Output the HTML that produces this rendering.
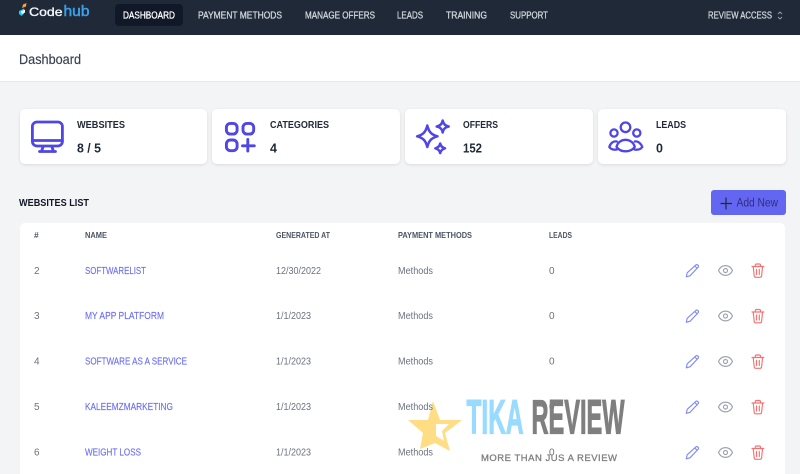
<!DOCTYPE html>
<html><head><meta charset="utf-8"><style>
html,body{margin:0;padding:0;width:800px;height:474px;overflow:hidden;background:#f3f4f6}
#w{position:relative;width:800px;height:474px;overflow:hidden;background:#f3f4f6}
.b{position:absolute}
.card{background:#fff;border-radius:5px;box-shadow:0 1px 3px rgba(0,0,0,.1)}
svg{position:absolute;left:0;top:0}
text{font-family:"Liberation Sans",sans-serif}
.n{font-size:10px;fill:#d1d5db;stroke:#d1d5db;stroke-width:.3}
.l{font-size:10.5px;font-weight:bold;fill:#1f2937}
.v{font-size:12.5px;font-weight:bold;fill:#1f2937}
.h{font-size:8.5px;font-weight:bold;fill:#4b5563}
.a{font-size:10.5px;fill:#6d70f3;stroke:#6d70f3;stroke-width:.15}
.t{font-size:10px;fill:#6b7280}
.i{fill:none;stroke:#4f46e5;stroke-width:2.7;stroke-linecap:round;stroke-linejoin:round}
</style></head><body><div id="w">
<div class="b" style="left:0;top:0;width:800px;height:35px;background:#1f2937"></div>
<div class="b" style="left:115px;top:4px;width:68px;height:22px;background:#111827;border-radius:4px"></div>
<div class="b" style="left:0;top:35px;width:800px;height:46px;background:#fff;border-bottom:1px solid #e5e7eb"></div>
<div class="b card" style="left:19.5px;top:109px;width:187.5px;height:55px"></div>
<div class="b card" style="left:212px;top:109px;width:188px;height:55px"></div>
<div class="b card" style="left:405px;top:109px;width:188px;height:55px"></div>
<div class="b card" style="left:598px;top:109px;width:187.5px;height:55px"></div>
<div class="b" style="left:711px;top:189.5px;width:74.5px;height:25.5px;background:#6366f1;border-radius:3px"></div>
<div class="b" style="left:19.5px;top:223px;width:765.5px;height:251px;background:#fff;border-radius:5px 5px 0 0"></div>
<svg width="800" height="474" viewBox="0 0 800 474">
<!-- logo -->
<path d="M19 11L24 8.500V13.500L21.500 16L19 14Z" fill="#2cc4f4"/><path d="M21 11.500L25 9.500V12.500L22 14Z" fill="#fff"/><path d="M22 8L23 4.500L26.500 3L26 6.500Z" fill="#f2a33a"/>
<text x="29" y="16" fill="#f1f5f9" stroke="#f1f5f9" stroke-width=".35" textLength="33.500" lengthAdjust="spacingAndGlyphs" style="font-size:12px">Code</text>
<text x="63.500" y="16" fill="#3aa0ea" stroke="#3aa0ea" stroke-width=".5" textLength="26" lengthAdjust="spacingAndGlyphs" style="font-size:14.500px">hub</text>
<!-- nav -->
<text class="n" x="123" y="18.500" textLength="52" lengthAdjust="spacingAndGlyphs" style="fill:#fff;stroke:#fff">DASHBOARD</text>
<text class="n" x="198" y="18.500" textLength="84" lengthAdjust="spacingAndGlyphs">PAYMENT METHODS</text>
<text class="n" x="305" y="18.500" textLength="70" lengthAdjust="spacingAndGlyphs">MANAGE OFFERS</text>
<text class="n" x="397" y="18.500" textLength="26" lengthAdjust="spacingAndGlyphs">LEADS</text>
<text class="n" x="446" y="18.500" textLength="41" lengthAdjust="spacingAndGlyphs">TRAINING</text>
<text class="n" x="510" y="18.500" textLength="38" lengthAdjust="spacingAndGlyphs">SUPPORT</text>
<text class="n" x="708" y="18.500" textLength="64" lengthAdjust="spacingAndGlyphs">REVIEW ACCESS</text>
<path d="M778 14l2-2 2 2M778 17l2 2 2-2" fill="none" stroke="#9ca3af" stroke-width=".9"/>
<text x="19" y="64" style="font-size:14px" fill="#374151" stroke="#374151" stroke-width=".15" textLength="62" lengthAdjust="spacingAndGlyphs">Dashboard</text>
<!-- stat labels -->
<text class="l" x="77" y="128" textLength="48" lengthAdjust="spacingAndGlyphs">WEBSITES</text>
<text class="l" x="270" y="128" textLength="59" lengthAdjust="spacingAndGlyphs">CATEGORIES</text>
<text class="l" x="463" y="128" textLength="35" lengthAdjust="spacingAndGlyphs">OFFERS</text>
<text class="l" x="656" y="128" textLength="30" lengthAdjust="spacingAndGlyphs">LEADS</text>
<text class="v" x="77" y="152.500" textLength="24" lengthAdjust="spacingAndGlyphs">8 / 5</text>
<text class="v" x="270" y="152.500">4</text>
<text class="v" x="463" y="152.500" textLength="19" lengthAdjust="spacingAndGlyphs">152</text>
<text class="v" x="656" y="152.500">0</text>
<!-- stat icons -->
<g class="i" style="stroke-width:2.800"><rect x="32.400" y="122" width="30" height="24" rx="4.500"/><path d="M32.400 140.500H62.400"/><path d="M43 147L41.500 151.500M52 147L53.500 151.500M39.500 151.500H55.500"/></g>
<g class="i" style="stroke-width:2.900"><rect x="226.400" y="123.400" width="10.700" height="10.700" rx="4"/><rect x="243" y="123.400" width="10.700" height="10.700" rx="4"/><rect x="226.400" y="140" width="10.700" height="10.700" rx="4"/><path d="M247.800 139.500V151M242.500 145.800H254.300"/></g>
<g class="i" style="stroke-width:2.500"><path d="M427.300 125.500C428.800 132 431.500 134.800 437.500 136.300C431.500 137.800 428.800 140.800 427.300 147C425.800 140.800 423.100 137.800 417.100 136.300C423.100 134.800 425.800 132 427.300 125.500Z"/><path d="M442.700 120.500C443.300 124 445 125.800 448.700 126.500C445 127.300 443.300 129 442.700 132.500C442.100 129 440.400 127.300 436.700 126.500C440.400 125.800 442.100 124 442.700 120.500Z"/><path d="M440.200 143.500C440.700 146 442 147.500 445 148.300C442 149.100 440.700 150.600 440.200 153.100C439.700 150.600 438.400 149.100 435.400 148.300C438.400 147.500 439.700 146 440.200 143.500Z"/></g>
<g class="i" style="stroke-width:2.300"><circle cx="625.500" cy="127.300" r="4.800"/><circle cx="614" cy="133" r="3.600"/><circle cx="636.800" cy="133" r="3.600"/><path d="M616.500 146.800C619 137.500 632 137.500 634.800 146.800C631 152.800 620.500 152.800 616.500 146.800Z"/><path d="M616.800 141.500C613 140.800 610.500 143.500 609.300 147C611 149.500 614 150 617 149.500M634.800 141.500C638 140.800 641 143.500 642.300 147C640.500 149.500 637.500 150 634.500 149.500"/></g>
<text x="19" y="206" style="font-size:10.5px;font-weight:bold" fill="#111827" textLength="70" lengthAdjust="spacingAndGlyphs">WEBSITES LIST</text>
<!-- button -->
<path d="M726 197.500v12M720.500 203.500h11.500" stroke="#1f2937" stroke-width="1.200" fill="none"/>
<text x="736.500" y="206.500" style="font-size:11.5px" fill="#312e81" textLength="41.500" lengthAdjust="spacingAndGlyphs">Add New</text>
<!-- watermark star -->
<path d="M433 401L440 420H462L445 433L450 451L435 443L420 449L423 433L408 420H428Z" fill="#ffdd85"/>
<path d="M436 424H449L442 431L444 441L436 436Z" fill="#fff"/>
<!-- table head -->
<text class="h" x="34" y="238">#</text>
<text class="h" x="85" y="238" textLength="22" lengthAdjust="spacingAndGlyphs">NAME</text>
<text class="h" x="276" y="238" textLength="54" lengthAdjust="spacingAndGlyphs">GENERATED AT</text>
<text class="h" x="398" y="238" textLength="74" lengthAdjust="spacingAndGlyphs">PAYMENT METHODS</text>
<text class="h" x="549" y="238" textLength="23" lengthAdjust="spacingAndGlyphs">LEADS</text>
<!-- rows -->
<text class="t" x="34" y="274">2</text><text class="a" x="85" y="274" textLength="61" lengthAdjust="spacingAndGlyphs">SOFTWARELIST</text><text class="t" x="276" y="274" textLength="45" lengthAdjust="spacingAndGlyphs">12/30/2022</text><text class="t" x="398" y="274" textLength="35" lengthAdjust="spacingAndGlyphs">Methods</text><text class="t" x="549" y="274">0</text>
<text class="t" x="34" y="319">3</text><text class="a" x="85" y="319" textLength="79" lengthAdjust="spacingAndGlyphs">MY APP PLATFORM</text><text class="t" x="276" y="319" textLength="35" lengthAdjust="spacingAndGlyphs">1/1/2023</text><text class="t" x="398" y="319" textLength="35" lengthAdjust="spacingAndGlyphs">Methods</text><text class="t" x="549" y="319">0</text>
<text class="t" x="34" y="364.500">4</text><text class="a" x="85" y="364.500" textLength="102" lengthAdjust="spacingAndGlyphs">SOFTWARE AS A SERVICE</text><text class="t" x="276" y="364.500" textLength="35" lengthAdjust="spacingAndGlyphs">1/1/2023</text><text class="t" x="398" y="364.500" textLength="35" lengthAdjust="spacingAndGlyphs">Methods</text><text class="t" x="549" y="364.500">0</text>
<text class="t" x="34" y="410">5</text><text class="a" x="85" y="410" textLength="88" lengthAdjust="spacingAndGlyphs">KALEEMZMARKETING</text><text class="t" x="276" y="410" textLength="35" lengthAdjust="spacingAndGlyphs">1/1/2023</text><text class="t" x="398" y="410" textLength="35" lengthAdjust="spacingAndGlyphs">Methods</text><text class="t" x="549" y="410">0</text>
<text class="t" x="34" y="455.500">6</text><text class="a" x="85" y="455.500" textLength="56" lengthAdjust="spacingAndGlyphs">WEIGHT LOSS</text><text class="t" x="276" y="455.500" textLength="35" lengthAdjust="spacingAndGlyphs">1/1/2023</text><text class="t" x="398" y="455.500" textLength="35" lengthAdjust="spacingAndGlyphs">Methods</text><text class="t" x="549" y="455.500">0</text>
<!-- row icons -->
<defs>
<g id="ri" fill="none" stroke-linecap="round" stroke-linejoin="round" stroke-width="1.150">
<path d="M686.300 276.800L687.200 272.800L696 264.800C697 263.900 699.200 265.800 698.300 267L690 275.800ZM694.700 266L697.200 268.300" stroke="#818cf8"/>
<path d="M718.500 270.500C721.500 264 729.500 264 732.500 270.500C729.500 277 721.500 277 718.500 270.500Z" stroke="#9ca3af"/><circle cx="725.500" cy="270.500" r="2" stroke="#9ca3af"/>
<path d="M752 266.500H763.800M755.300 266.500V265.200C755.300 264.500 755.800 264 756.500 264H759.300C760 264 760.500 264.500 760.500 265.200V266.500M753.200 266.500L754.200 275.800C754.300 276.800 755 277.300 755.800 277.300H760C760.800 277.300 761.500 276.800 761.600 275.800L762.600 266.500M756.500 269.500V274.500M759.300 269.500V274.500" stroke="#f87171"/>
</g>
</defs>
<use href="#ri"/><use href="#ri" y="45.500"/><use href="#ri" y="91"/><use href="#ri" y="136.500"/><use href="#ri" y="182"/>
<!-- watermark text -->
<text x="466.500" y="433.500" style="font-size:48px;font-weight:bold" fill="#99dbff" stroke="#99dbff" stroke-width="1.200" textLength="57" lengthAdjust="spacingAndGlyphs">TIKA</text>
<text x="531.500" y="433.500" style="font-size:48px;font-weight:bold" fill="#7f7f7f" stroke="#7f7f7f" stroke-width="1.200" textLength="93" lengthAdjust="spacingAndGlyphs">REVIEW</text>
<text x="481" y="461" style="font-size:9.500px" fill="#808080" stroke="#808080" stroke-width=".3" textLength="136" lengthAdjust="spacing">MORE THAN JUS A REVIEW</text>
</svg>
</div></body></html>
